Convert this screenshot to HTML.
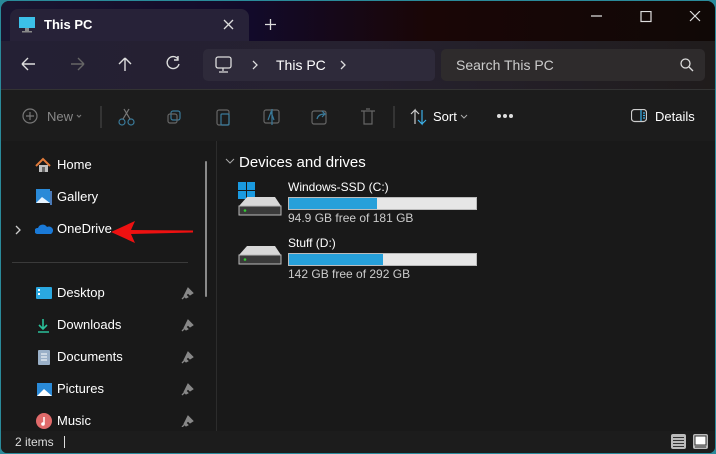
<!DOCTYPE html><html><head><style>
*{margin:0;padding:0;box-sizing:border-box}
body{width:716px;height:454px;overflow:hidden;background:#2a8a9a;font-family:"Liberation Sans",sans-serif;color:#fff;font-size:12px}
.win{position:absolute;left:1px;top:1px;width:714px;height:452px;border-radius:8px 8px 6px 6px;overflow:hidden;background:#191919}
.title{position:absolute;left:0;top:0;width:714px;height:40px;background:linear-gradient(90deg,#1a1630 0%,#120a2a 35%,#1a0606 60%,#100806 100%)}
.tab{position:absolute;left:9px;top:8px;width:239px;height:34px;background:#272238;border-radius:8px 8px 0 0}
.nav{position:absolute;left:0;top:40px;width:714px;height:48px;background:linear-gradient(90deg,#242034,#262130 50%,#201c1c)}
.tool{position:absolute;left:0;top:88px;width:714px;height:52px;background:#1c1c1c;border-top:1px solid #333}
.t{position:absolute;white-space:nowrap}
svg{position:absolute}
</style></head><body><div class="win">
<div class="title"></div>
<div class="tab"></div>
<svg style="left:17px;top:15px" width="18" height="17"><rect x="1" y="1" width="16" height="11" fill="#3cc0e8"/><rect x="7" y="12" width="4" height="3" fill="#888"/><rect x="4" y="15" width="10" height="1.5" fill="#888"/></svg>
<div class="t" style="left:43px;top:16px;font-size:13px;font-weight:bold">This PC</div>
<svg style="left:222px;top:18px" width="11" height="11" stroke="#ddd" stroke-width="1.3"><path d="M1 1L10 10M10 1L1 10"/></svg>
<svg style="left:264px;top:18px" width="11" height="11" stroke="#ddd" stroke-width="1.3"><path d="M5.5 0V11M0 5.5H11"/></svg>
<svg style="left:590px;top:10px" width="120" height="16" stroke="#ddd" fill="none" stroke-width="1.2"><path d="M0 5H11"/><rect x="50" y="0.5" width="10" height="10"/><path d="M99 0L109 10M109 0L99 10"/></svg>
<div class="nav"></div>
<svg style="left:18px;top:54px" width="170" height="18" stroke="#ddd" fill="none" stroke-width="1.4"><path d="M3 9H16M3 9L9 3M3 9L9 15"/><path d="M52 9H65M65 9L59 3M65 9L59 15" stroke="#666"/><path d="M106 3V16M106 3L100 9M106 3L112 9"/><path d="M159 4A6 6 0 1 0 160 9M159 1V5H155"/></svg>
<div style="position:absolute;left:202px;top:48px;width:232px;height:32px;background:#2e2a3a;border-radius:5px"></div>
<svg style="left:214px;top:55px" width="20" height="18" stroke="#ddd" fill="none" stroke-width="1.3"><rect x="1" y="1" width="15" height="11" rx="2"/><path d="M8 12V15M4 16H13"/></svg>
<svg style="left:250px;top:59px" width="8" height="10" stroke="#ddd" fill="none" stroke-width="1.3"><path d="M2 1L6 5L2 9"/></svg>
<div class="t" style="left:275px;top:56px;font-size:14px">This PC</div>
<svg style="left:338px;top:59px" width="8" height="10" stroke="#ddd" fill="none" stroke-width="1.3"><path d="M2 1L6 5L2 9"/></svg>
<div style="position:absolute;left:440px;top:48px;width:264px;height:32px;background:#2e2b2c;border-radius:5px"></div>
<div class="t" style="left:455px;top:56px;font-size:14px;color:#ccc">Search This PC</div>
<svg style="left:679px;top:57px" width="14" height="14" stroke="#ddd" fill="none" stroke-width="1.3"><circle cx="5.5" cy="5.5" r="4.5"/><path d="M9 9L13 13"/></svg>
<div class="tool"></div>
<svg style="left:20px;top:105px" width="480" height="22" fill="none" stroke-width="1.2"><circle cx="9" cy="10" r="7" stroke="#777"/><path d="M9 6V14M5 10H13" stroke="#777"/><path d="M56 9L58 11L60 9" stroke="#777"/>
<path d="M80 0V24" stroke="#444"/>
<circle cx="101" cy="16" r="3" stroke="#3a7a9a"/><circle cx="110" cy="16" r="3" stroke="#3a7a9a"/><path d="M102 13L108 3M109 13L103 3" stroke="#777"/>
<rect x="150" y="5" width="9" height="9" rx="2" stroke="#3a7a9a"/><rect x="147" y="8" width="9" height="9" rx="2" stroke="#666"/>
<rect x="196" y="4" width="12" height="15" rx="2" stroke="#666"/><rect x="200" y="8" width="8" height="11" rx="1" stroke="#3a7a9a"/>
<rect x="243" y="4" width="15" height="13" rx="2" stroke="#666"/><path d="M247 14L250 6L253 14M251 3V19" stroke="#3a7a9a"/>
<rect x="291" y="5" width="14" height="13" rx="2" stroke="#666"/><path d="M296 13Q297 8 304 8L301 5M304 8L301 11" stroke="#3a7a9a"/>
<path d="M340 5H354M343 5V18H351V5M345 3H349" stroke="#666"/>
<path d="M373 0V24" stroke="#444"/>
<path d="M394 18V4L390 8M394 4L398 8" stroke="#ccc"/><path d="M401 4V18L397 14M401 18L405 14" stroke="#3cb0e8"/></svg>
<div class="t" style="left:46px;top:108px;font-size:13px;color:#888">New</div>
<div class="t" style="left:432px;top:108px;font-size:13px">Sort</div>
<svg style="left:459px;top:113px" width="10" height="6" fill="none" stroke="#aaa"><path d="M1 1L4 4L7 1"/></svg>
<svg style="left:495px;top:112px" width="20" height="6" fill="#ddd"><circle cx="3" cy="3" r="2"/><circle cx="9" cy="3" r="2"/><circle cx="15" cy="3" r="2"/></svg>
<svg style="left:630px;top:108px" width="16" height="14" fill="none" stroke-width="1.2"><rect x="0.5" y="0.5" width="15" height="12" rx="3" stroke="#ccc"/><path d="M10 1V12M12 4H14M12 6.5H14M12 9H14" stroke="#3cb0e8"/></svg>
<div class="t" style="left:654px;top:108px;font-size:13px">Details</div>
<div style="position:absolute;left:215px;top:140px;width:1px;height:290px;background:#2c2c2c"></div>
<div style="position:absolute;left:204px;top:160px;width:2px;height:136px;background:#8a8a8a;border-radius:1px"></div>
<svg style="left:34px;top:156px" width="18" height="18"><path d="M1 9L8 2L15 9" fill="none" stroke="#e07a3a" stroke-width="2"/><rect x="4" y="8" width="9" height="7" fill="#c0c0c0"/><rect x="7" y="10" width="3" height="5" fill="#666"/></svg>
<div class="t" style="left:56px;top:156px;font-size:13px">Home</div>
<svg style="left:35px;top:188px" width="18" height="18"><rect x="0" y="0" width="14" height="14" fill="#2a8ad8"/><path d="M0 14L6 8L14 14Z" fill="#e8f4ff"/><rect x="14" y="2" width="2" height="14" fill="#4a7ab8"/></svg>
<div class="t" style="left:56px;top:188px;font-size:13px">Gallery</div>
<svg style="left:13px;top:224px" width="8" height="10" stroke="#ccc" fill="none" stroke-width="1.3"><path d="M2 1L6 5L2 9"/></svg>
<svg style="left:34px;top:222px" width="18" height="12"><path d="M2 11A3 3 0 0 1 3 5A5 5 0 0 1 12 4A4 4 0 0 1 16 11Z" fill="#1a7ad8"/></svg>
<div class="t" style="left:56px;top:220px;font-size:13px">OneDrive</div>
<svg style="left:108px;top:218px" width="86" height="26"><path d="M2 13L26 2L22 11L84 11.5V13.5L22 15L26 24Z" fill="#ee1111"/></svg>
<div style="position:absolute;left:11px;top:261px;width:176px;height:1px;background:#3a3a3a"></div>
<svg style="left:35px;top:286px" width="18" height="16"><rect x="0" y="0" width="16" height="12" rx="1" fill="#2aa8e0"/><rect x="2" y="2" width="2" height="2" fill="#fff"/><rect x="2" y="6" width="2" height="2" fill="#fff"/></svg>
<div class="t" style="left:56px;top:284px;font-size:13px">Desktop</div>
<svg style="left:36px;top:317px" width="16" height="16" fill="none" stroke="#2ac09a" stroke-width="1.6"><path d="M6 1V11M2 7L6 11L10 7M1 14H12"/></svg>
<div class="t" style="left:56px;top:316px;font-size:13px">Downloads</div>
<svg style="left:37px;top:349px" width="14" height="16"><rect x="0" y="0" width="12" height="15" rx="1" fill="#9ab0c8"/><path d="M3 4H9M3 7H9M3 10H9" stroke="#fff"/></svg>
<div class="t" style="left:56px;top:348px;font-size:13px">Documents</div>
<svg style="left:36px;top:382px" width="16" height="14"><rect x="0" y="0" width="15" height="13" fill="#2a8ad8"/><path d="M0 13L7 6L15 13Z" fill="#fff"/></svg>
<div class="t" style="left:56px;top:380px;font-size:13px">Pictures</div>
<svg style="left:35px;top:412px" width="17" height="17"><circle cx="8" cy="8" r="8" fill="#e06a6a"/><path d="M8 4V11" stroke="#fff" stroke-width="1.5"/><circle cx="7" cy="11" r="1.8" fill="#fff"/></svg>
<div class="t" style="left:56px;top:412px;font-size:13px">Music</div>
<svg style="left:180px;top:286px" width="14" height="140" fill="#888" stroke="#888"><g id="p"><path d="M7 1L12 6L9 8L7 6L5 8L7 10L5 11L3 9Z"/><path d="M4 9L1 12" stroke-width="1.3"/></g><use href="#p" y="32"/><use href="#p" y="64"/><use href="#p" y="96"/><use href="#p" y="128"/></svg>
<svg style="left:224px;top:156px" width="10" height="8" fill="none" stroke="#aaa"><path d="M1 2L5 6L9 2"/></svg>
<div class="t" style="left:238px;top:153px;font-size:15px">Devices and drives</div>
<svg style="left:236px;top:180px" width="48" height="40"><rect x="1" y="1" width="8" height="8" fill="#1a9ae0"/><rect x="10" y="1" width="8" height="8" fill="#1a9ae0"/><rect x="1" y="10" width="8" height="8" fill="#1a9ae0"/><rect x="10" y="10" width="8" height="8" fill="#1a9ae0"/><path d="M2 25L10 16H38L44 25Z" fill="#d8d8d8"/><rect x="2" y="25" width="42" height="9" fill="#3a3a3a" stroke="#bbb"/><circle cx="8" cy="29.5" r="1.3" fill="#3c3"/></svg>
<svg style="left:236px;top:244px" width="48" height="30"><path d="M2 10L10 1H38L44 10Z" fill="#d8d8d8"/><rect x="2" y="10" width="42" height="9" fill="#3a3a3a" stroke="#bbb"/><circle cx="8" cy="14.5" r="1.3" fill="#3c3"/></svg>
<div class="t" style="left:287px;top:179px;font-size:12px">Windows-SSD (C:)</div>
<div style="position:absolute;left:287px;top:196px;width:189px;height:13px;background:#e6e6e6;border:1px solid #bbb"><div style="width:88px;height:11px;background:#26a0da"></div></div>
<div class="t" style="left:287px;top:210px;font-size:12px;color:#ccc">94.9 GB free of 181 GB</div>
<div class="t" style="left:287px;top:235px;font-size:12px">Stuff (D:)</div>
<div style="position:absolute;left:287px;top:252px;width:189px;height:13px;background:#e6e6e6;border:1px solid #bbb"><div style="width:94px;height:11px;background:#26a0da"></div></div>
<div class="t" style="left:287px;top:266px;font-size:12px;color:#ccc">142 GB free of 292 GB</div>
<div style="position:absolute;left:0;top:430px;width:714px;height:22px;background:#1c1c1c"></div>
<div class="t" style="left:14px;top:434px;font-size:12px;color:#ddd">2 items</div>
<div style="position:absolute;left:63px;top:435px;width:1px;height:12px;background:#ddd"></div>
<svg style="left:669px;top:432px" width="40" height="18"><rect x="1" y="1" width="15" height="15" rx="2" fill="#bbb"/><path d="M3 4.5H14M3 7.5H14M3 10.5H14M3 13.5H14" stroke="#333"/><rect x="23" y="1" width="15" height="15" rx="2" fill="#bbb"/><rect x="25" y="3" width="11" height="9" fill="#fff" stroke="#333"/><path d="M25 14H36" stroke="#333"/></svg>
</div></body></html>
